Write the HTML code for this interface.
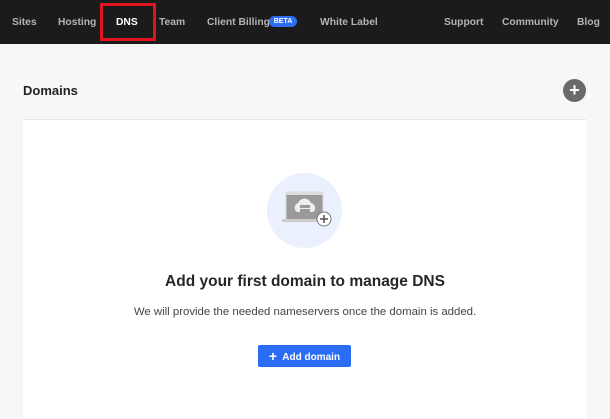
<!DOCTYPE html>
<html><head><style>
*{margin:0;padding:0;box-sizing:border-box}
body{width:610px;height:403px;background:#f7f7f7;font-family:"Liberation Sans",sans-serif;position:relative;overflow:hidden}
.nav{position:absolute;left:0;top:0;width:610px;height:44px;background:#1b1b1b}
.nav span{position:absolute;top:17px;font-size:10.3px;font-weight:bold;color:#b4b4b4;white-space:nowrap}
.badge{position:absolute;left:269px;top:16px;width:28px;height:11px;border-radius:6px;background:#2e6cf2;color:#fff;font-size:7px;font-weight:bold;text-align:center;line-height:11px}
.red{position:absolute;left:100px;top:3px;width:56px;height:38px;border:3px solid #e0141e}
.h{position:absolute;left:23px;top:83px;font-size:13px;font-weight:bold;color:#222}
.plus{position:absolute;left:563px;top:79px;width:23px;height:23px;border-radius:50%;background:#6a6a6a;color:#fff;font-size:18px;font-weight:bold;text-align:center;line-height:22px}
.card{position:absolute;left:23px;top:119px;width:563px;height:300px;background:#fff;border-top:1px solid #e6e6e6}
.circ{position:absolute;left:267px;top:173px;width:75px;height:75px;border-radius:50%;background:#eaf0fd}
h2{position:absolute;left:0;width:610px;top:273px;text-align:center;font-size:15.5px;font-weight:bold;color:#262626}
p{position:absolute;left:0;width:610px;top:306px;text-align:center;font-size:11.4px;color:#444}
.btn{position:absolute;left:258px;top:345px;width:93px;height:22px;background:#2b6cf5;border-radius:2px;color:#fff;font-size:10px;font-weight:bold;line-height:22px;text-align:center}
</style></head><body>
<div class="nav">
<span style="left:12px">Sites</span>
<span style="left:58px">Hosting</span>
<span style="left:116px;color:#fff">DNS</span>
<span style="left:159px">Team</span>
<span style="left:207px">Client Billing</span>
<div class="badge">BETA</div>
<span style="left:320px">White Label</span>
<span style="left:444px">Support</span>
<span style="left:502px">Community</span>
<span style="left:577px">Blog</span>
</div>
<div class="red"></div>
<div class="h">Domains</div>
<div class="plus">+</div>
<div class="card"></div>
<div class="circ"></div>
<svg style="position:absolute;left:250px;top:160px" width="110" height="100" viewBox="0 0 110 100">
<rect x="36" y="32" width="37" height="28" fill="#9a9a9a" stroke="#ddd"/>
<rect x="36" y="32" width="37" height="3" fill="#ddd"/>
<rect x="32" y="59" width="42" height="3" fill="#ccc"/>
<path d="M47 52 a5 5 0 0 1 1-9 a7 7 0 0 1 13 0 a5 5 0 0 1 2 9 z" fill="#eee"/>
<rect x="50" y="45" width="10" height="3" fill="#999"/>
<rect x="50" y="49" width="10" height="3" fill="#999"/>
<circle cx="74" cy="59" r="7" fill="#fff" stroke="#777"/>
<path d="M74 55v8M70 59h8" stroke="#555" stroke-width="1.5"/>
</svg>
<h2>Add your first domain to manage DNS</h2>
<p>We will provide the needed nameservers once the domain is added.</p>
<div class="btn"><span style="font-size:14px;vertical-align:-1px">+</span>&nbsp; Add domain</div>
</body></html>
